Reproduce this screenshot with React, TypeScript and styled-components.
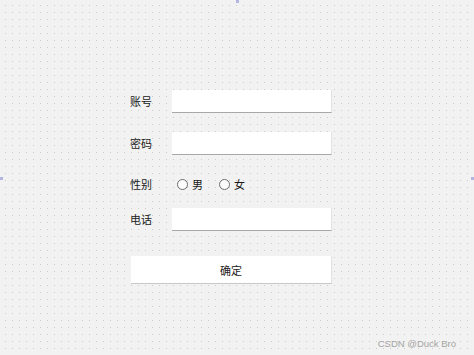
import { FC } from 'react'
import styled, { createGlobalStyle } from 'styled-components'

const GlobalStyle = createGlobalStyle`
  html, body {
    margin: 0;
    padding: 0;
  }
  body {
    font-family: "Noto Sans CJK SC", "Liberation Sans", sans-serif;
    color: #1a1a1a;
  }
`

const Canvas = styled.div`
  position: relative;
  width: 474px;
  height: 355px;
  overflow: hidden;
  background-color: #f2f2f2;
  background-image: radial-gradient(circle, #cbcbcb 0.7px, transparent 1px);
  background-size: 7px 7px;
  background-position: 2px 2px;
  padding: 90px 0 0 130px;
  box-sizing: border-box;
`

const Form = styled.div`
  display: flex;
  flex-direction: column;
  width: 202px;
`

const Row = styled.div<{ $mt: number }>`
  display: flex;
  align-items: center;
  height: 23px;
  margin-top: ${({ $mt }) => $mt}px;
`

const Label = styled.span`
  width: 42px;
  font-size: 11px;
  line-height: 1;
`

const Input = styled.div`
  width: 160px;
  height: 23px;
  box-sizing: border-box;
  background: #ffffff;
  border-bottom: 1px solid #a8a8a8;
  border-right: 1px solid #e2e2e2;
`

const RadioGroup = styled.div`
  display: flex;
  align-items: center;
  gap: 16px;
  padding-left: 5px;
`

const Radio = styled.label`
  display: flex;
  align-items: center;
  gap: 4px;
  font-size: 11px;
  line-height: 1;
`

const RadioDot = styled.span`
  width: 9px;
  height: 9px;
  border-radius: 50%;
  border: 1px solid #6e6e6e;
  background: #fdfdfd;
`

const SubmitButton = styled.div`
  margin-top: 25px;
  margin-left: 1px;
  width: 201px;
  height: 28px;
  box-sizing: border-box;
  display: flex;
  align-items: center;
  justify-content: center;
  background: #ffffff;
  border-bottom: 1px solid #c8c8c8;
  border-right: 1px solid #e0e0e0;
  font-size: 11px;
`

const Handle = styled.span`
  position: absolute;
  width: 3px;
  height: 3px;
  background: #b4b4e0;
`

const Watermark = styled.span`
  position: absolute;
  right: 18px;
  bottom: 6px;
  font-family: "Liberation Sans", Arial, sans-serif;
  font-size: 9.5px;
  color: #a4a4a4;
`

const fields = [
  { label: '账号', mt: 0 },
  { label: '密码', mt: 19 },
]

const App: FC = () => (
  <>
    <GlobalStyle />
    <Canvas>
      <Form>
        {fields.map((f) => (
          <Row key={f.label} $mt={f.mt}>
            <Label>{f.label}</Label>
            <Input />
          </Row>
        ))}
        <Row $mt={18}>
          <Label>性别</Label>
          <RadioGroup>
            <Radio>
              <RadioDot />男
            </Radio>
            <Radio>
              <RadioDot />女
            </Radio>
          </RadioGroup>
        </Row>
        <Row $mt={12}>
          <Label>电话</Label>
          <Input />
        </Row>
        <SubmitButton>确定</SubmitButton>
      </Form>
      <Handle style={{ left: 236, top: 0 }} />
      <Handle style={{ left: 0, top: 177 }} />
      <Handle style={{ right: 0, top: 177 }} />
      <Watermark>CSDN @Duck Bro</Watermark>
    </Canvas>
  </>
)

export default App
